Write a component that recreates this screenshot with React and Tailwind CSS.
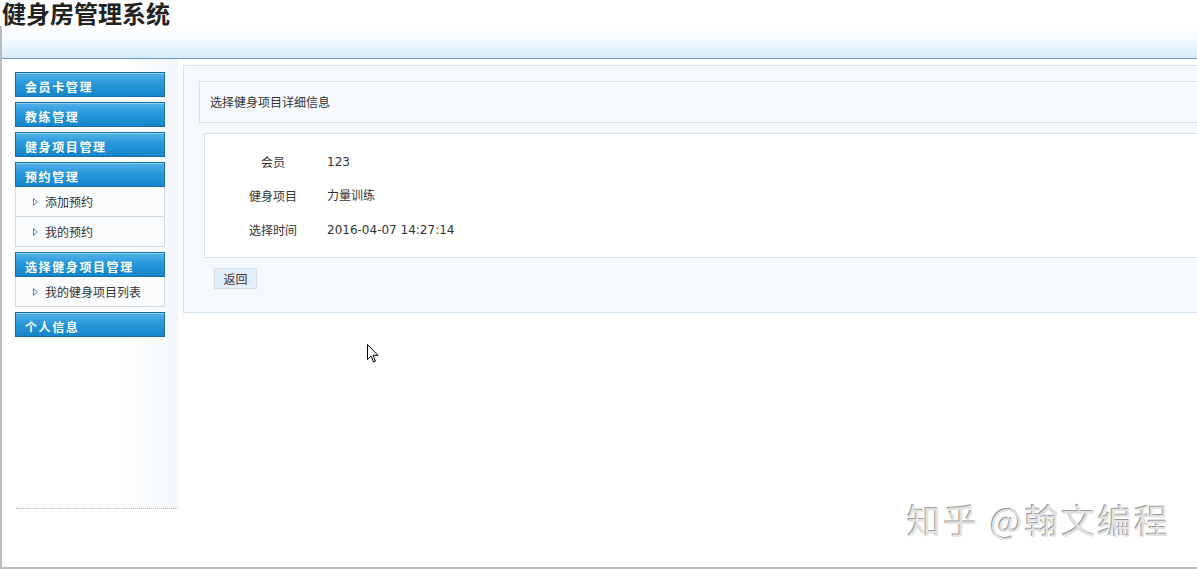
import React from 'react';

const menu = [
  { title: '会员卡管理', items: [] },
  { title: '教练管理', items: [] },
  { title: '健身项目管理', items: [] },
  { title: '预约管理', items: ['添加预约', '我的预约'] },
  { title: '选择健身项目管理', items: ['我的健身项目列表'] },
  { title: '个人信息', items: [] },
];

const details = [
  { label: '会员', value: '123' },
  { label: '健身项目', value: '力量训练' },
  { label: '选择时间', value: '2016-04-07 14:27:14' },
];

const Arrow = () => (
  <svg width="5" height="8" viewBox="0 0 5 8" className="mr-[7px]">
    <path d="M0.5 0.5 L4.5 4 L0.5 7.5 Z" fill="#eaf3fb" stroke="#5a8db5" strokeWidth="1" />
  </svg>
);

const MenuGroup = ({ group }) => (
  <div className="mb-[5px]">
    <div className="h-[25px] border border-[#136fab] bg-gradient-to-b from-[#4fb2ea] via-[#2596d8] to-[#1686ca] shadow-[inset_0_1px_0_#8fd0f5] pl-[9px] pt-[6px] text-[12px] leading-[16px] font-bold tracking-[1.6px] text-white">
      {group.title}
    </div>
    {group.items.length > 0 && (
      <div className="border-x border-[#cfdae4] bg-[#fafcfe]">
        {group.items.map((item) => (
          <div key={item} className="h-[30px] border-b border-[#cfdae4] flex items-center pl-[17px] text-[12px] text-[#333]">
            <Arrow />
            {item}
          </div>
        ))}
      </div>
    )}
  </div>
);

export default function App() {
  return (
    <div className="w-[1197px] h-[570px] bg-white relative overflow-hidden font-['DejaVu_Sans','Noto_Sans_CJK_SC',sans-serif]">
      <div className="h-[26px] pl-[2px] text-[24px] leading-[26px] font-bold text-[#222] font-['Noto_Sans_CJK_SC',sans-serif]">
        健身房管理系统
      </div>
      <div className="h-[543px] border-l-2 border-b-2 border-[#bcbcbc]">
        <div className="h-[33px] bg-gradient-to-b from-white via-[#f2f9fe] to-[#d6ebfb] border-b border-[#7099b8]"></div>
        <div className="flex">
          <div className="w-[176px] shrink-0">
            <div className="h-[449px] pt-[13px] pl-[13px] pr-[13px] bg-gradient-to-r from-white via-white via-65% to-[#f3f7fc] font-['Noto_Sans_CJK_SC',sans-serif]">
              {menu.map((g) => (
                <MenuGroup key={g.title} group={g} />
              ))}
            </div>
            <div className="ml-[14px] border-b border-dotted border-[#b8b8b8]"></div>
          </div>
          <div className="flex-1 mt-[6px] ml-[5px] h-[248px] border border-r-0 border-[#d5e3ee] bg-[#f5f9fd] pt-[15px] pl-[15px]">
            <div className="h-[42px] border border-r-0 border-[#d5e2ec] bg-[#f7fafd] flex items-center pl-[10px] text-[12px] text-[#333] font-['Noto_Sans_CJK_SC',sans-serif]">
              选择健身项目详细信息
            </div>
            <div className="ml-[5px] mt-[10px] h-[125px] border border-r-0 border-[#d5e2ec] bg-white pt-[11px]">
              {details.map((d) => (
                <div key={d.label} className="h-[34px] flex items-center text-[12px] text-[#333]">
                  <div className="ml-[18px] w-[100px] text-center font-['Noto_Sans_CJK_SC',sans-serif]">{d.label}</div>
                  <div className="pl-[4px]">{d.value}</div>
                </div>
              ))}
            </div>
            <div className="ml-[15px] mt-[10px] w-[43px] h-[21px] border border-[#d2e0ec] bg-[#e3eef9] flex items-center justify-center text-[12px] text-[#333] font-['Noto_Sans_CJK_SC',sans-serif]">
              返回
            </div>
          </div>
        </div>
      </div>

      <div className="absolute left-[907px] top-[498px] text-[34px] leading-[44px] text-[#e2e2e2] font-['Noto_Sans_CJK_SC',sans-serif] [text-shadow:-1px_-1px_0_#9a9a9a,1px_1px_0_#fff] tracking-[2.5px]">
        知乎 @翰文编程
      </div>

      <svg className="absolute left-[367px] top-[344px]" width="13" height="20" viewBox="0 0 13 20">
        <path d="M0.5 0.5 L0.5 15.5 L4 12 L6.5 18 L8.5 17.2 L6 11.3 L11 11.3 Z" fill="#fff" stroke="#000" strokeWidth="1" strokeLinejoin="miter" />
      </svg>
    </div>
  );
}
